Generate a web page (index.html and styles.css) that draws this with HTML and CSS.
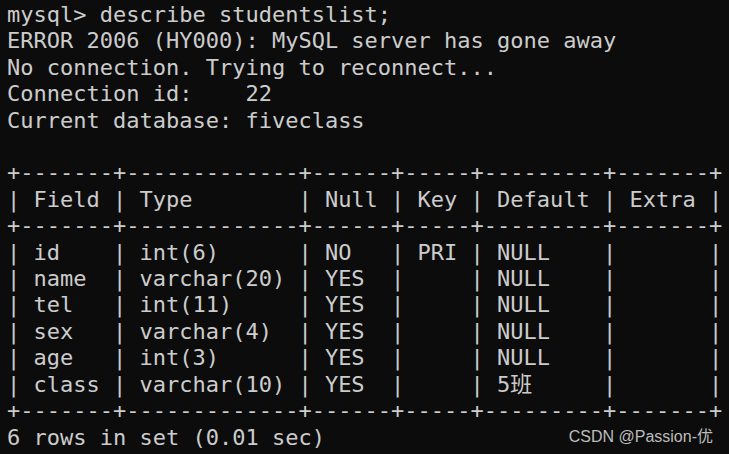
FILE: index.html
```html
<!DOCTYPE html>
<html>
<head>
<meta charset="utf-8">
<link rel="stylesheet" href="styles.css">
</head>
<body>
<div class="terminal">
<pre class="output">mysql&gt; describe studentslist;
ERROR 2006 (HY000): MySQL server has gone away
No connection. Trying to reconnect...
Connection id:    22
Current database: fiveclass

+-------+-------------+------+-----+---------+-------+
| Field | Type        | Null | Key | Default | Extra |
+-------+-------------+------+-----+---------+-------+
| id    | int(6)      | NO   | PRI | NULL    |       |
| name  | varchar(20) | YES  |     | NULL    |       |
| tel   | int(11)     | YES  |     | NULL    |       |
| sex   | varchar(4)  | YES  |     | NULL    |       |
| age   | int(3)      | YES  |     | NULL    |       |
| class | varchar(10) | YES  |     | 5<span class="wide">班</span>     |       |
+-------+-------------+------+-----+---------+-------+
6 rows in set (0.01 sec)</pre>
<div class="watermark">CSDN @Passion-优</div>
</div>
</body>
</html>
```
FILE: styles.css
```css
html, body {
  margin: 0;
  padding: 0;
  background: #0c0c0c;
}
.terminal {
  position: relative;
  width: 729px;
  height: 454px;
  overflow: hidden;
  background: #0c0c0c;
}
.output {
  margin: 0;
  padding: 2px 0 0 7px;
  font-family: "DejaVu Sans Mono", "Noto Sans CJK SC", monospace;
  font-size: 22px;
  line-height: 26.4px;
  color: #cccccc;
}
.wide {
  font-family: "Noto Sans CJK SC", sans-serif;
  line-height: 0;
  letter-spacing: 4.49px;
}
.watermark {
  position: absolute;
  right: 16px;
  bottom: 7px;
  font-family: "Liberation Sans", "Noto Sans CJK SC", sans-serif;
  font-size: 16px;
  color: #bdbdbd;
}
```
